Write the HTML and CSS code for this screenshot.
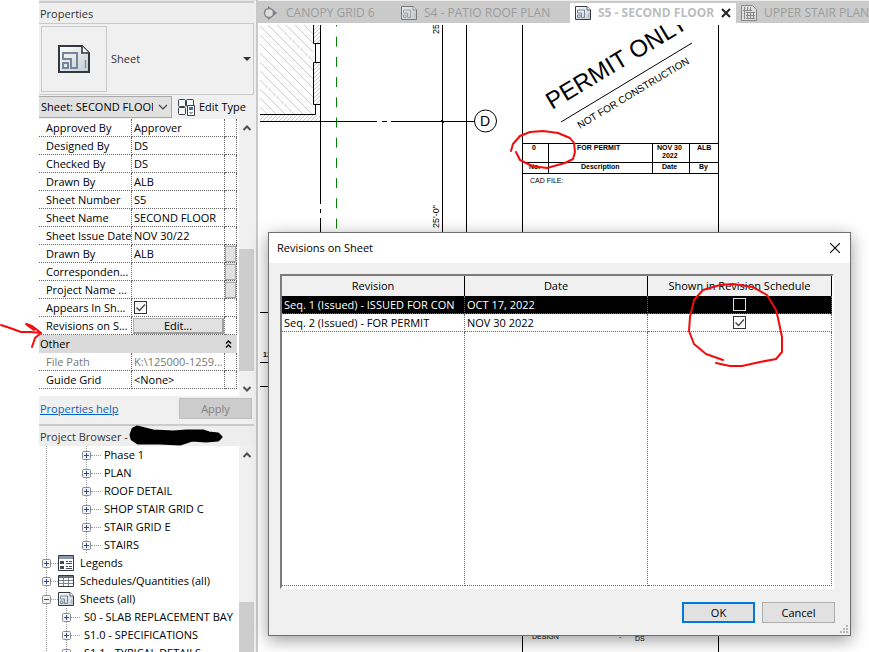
FILE: index.html
```html
<!DOCTYPE html>
<html lang="en">
<head>
<meta charset="utf-8">
<title>Revisions on Sheet</title>
<link rel="stylesheet" href="styles.css">
</head>
<body>
<svg class="defs" aria-hidden="true">
  <defs>
    <linearGradient id="paper" x1="0" y1="0" x2="1" y2="1">
      <stop offset="0" stop-color="#fff"/><stop offset="1" stop-color="#c4ccd4"/>
    </linearGradient>
    <symbol id="sheet" viewBox="0 0 32 28">
      <path d="M1 1h23l7 7v19H1z" fill="url(#paper)" stroke="#33383e" stroke-width="2"/>
      <path d="M24 1v7h7" fill="#fff" stroke="#33383e" stroke-width="1.6"/>
      <path d="M5 14V8h14v15h-6v-9zM5 18h5v5H5z" fill="none" stroke="#76869a" stroke-width="2"/>
      <path d="M27.500 15v8" stroke="#8a929c" stroke-width="1.500"/>
    </symbol>
    <symbol id="up" viewBox="0 0 10 6"><path d="M1.500 5 5 1.500 8.500 5" fill="none" stroke="#505050" stroke-width="2"/></symbol>
    <symbol id="down" viewBox="0 0 10 6"><path d="M1.500 1 5 4.500 8.500 1" fill="none" stroke="#505050" stroke-width="2"/></symbol>
    <symbol id="plus" viewBox="0 0 9 9"><rect x=".5" y=".5" width="8" height="8" rx="1" fill="#f4f4f4" stroke="#8c8c8c"/><path d="M2 4.500h5M4.500 2v5" stroke="#2b4a9b"/></symbol>
    <symbol id="minus" viewBox="0 0 9 9"><rect x=".5" y=".5" width="8" height="8" rx="1" fill="#f4f4f4" stroke="#8c8c8c"/><path d="M2 4.500h5" stroke="#2b4a9b"/></symbol>
  </defs>
</svg>

<div class="app">
  <aside class="dock">
    <section class="properties">
      <h2 class="panel-title">Properties</h2>
      <div class="type-box">
        <div class="preview"><svg width="32" height="28"><use href="#sheet"/></svg></div>
        <span class="type-name">Sheet</span>
        <svg class="caret" width="8" height="4"><path d="M0 0h8L4 4z" fill="#333"/></svg>
      </div>
      <div class="selector">
        <div class="combo">
          <select aria-label="Element"><option>Sheet: SECOND FLOOR</option></select>
          <svg class="combo-arrow" width="10" height="6" viewBox="0 0 10 6"><path d="M1 1l4 4 4-4" fill="none" stroke="#444" stroke-width="1.200"/></svg>
        </div>
        <button class="edit-type">
          <svg width="17" height="17" viewBox="0 0 17 17" stroke="#3a4048">
            <path d="M1.500.500h5q1 0 1 1v5q0 1-1 1h-5q-1 0-1-1v-5q0-1 1-1zM9.500.500h5q1 0 1 1v5q0 1-1 1h-5q-1 0-1-1v-5q0-1 1-1zM1.500 8.500h5q1 0 1 1v5q0 1-1 1h-5q-1 0-1-1v-5q0-1 1-1z" fill="#f4f6f8"/>
            <path d="M9.500 6.500h7v10h-7z" fill="#fff"/><path d="M11 8h4v3h-4z" fill="#2f73b8" stroke="none"/><path d="M11.500 13l1.500 1.500 1.500-1.500" fill="none"/>
          </svg>
          Edit Type
        </button>
      </div>
      <div class="scroll-area">
        <table class="props">
          <colgroup><col class="c-name"><col class="c-value"><col class="c-assoc"></colgroup>
          <tbody>
            <tr><th>Approved By</th><td>Approver</td><td></td></tr>
            <tr><th>Designed By</th><td>DS</td><td></td></tr>
            <tr><th>Checked By</th><td>DS</td><td></td></tr>
            <tr><th>Drawn By</th><td>ALB</td><td></td></tr>
            <tr><th>Sheet Number</th><td>S5</td><td></td></tr>
            <tr><th>Sheet Name</th><td>SECOND FLOOR</td><td></td></tr>
            <tr><th>Sheet Issue Date</th><td>NOV 30/22</td><td></td></tr>
            <tr><th>Drawn By</th><td>ALB</td><td class="assoc"><button aria-label="Associate Drawn By"></button></td></tr>
            <tr><th>Corresponden...</th><td></td><td class="assoc"><button aria-label="Associate Correspondence"></button></td></tr>
            <tr><th>Project Name ...</th><td></td><td class="assoc"><button aria-label="Associate Project Name"></button></td></tr>
            <tr><th><label for="appears">Appears In Sh...</label></th><td><input class="check" type="checkbox" id="appears" checked></td><td></td></tr>
            <tr><th>Revisions on S...</th><td class="edit-cell"><button>Edit...</button></td><td></td></tr>
            <tr class="group"><th colspan="2">Other</th><td><svg width="7" height="8" viewBox="0 0 7 8"><path d="M1 3.500 3.500 1 6 3.500M1 7.500 3.500 5 6 7.500" fill="none" stroke="#000" stroke-width="1.400"/></svg></td></tr>
            <tr class="muted"><th>File Path</th><td>K:\125000-1259...</td><td></td></tr>
            <tr><th>Guide Grid</th><td>&lt;None&gt;</td><td></td></tr>
          </tbody>
        </table>
        <div class="scrollbar props-bar"><svg width="10" height="6"><use href="#up"/></svg><i></i><i class="thumb"></i><svg width="10" height="6"><use href="#down"/></svg></div>
      </div>
      <div class="panel-foot"><a href="#help">Properties help</a><button class="apply" disabled>Apply</button></div>
    </section>

    <section class="browser">
      <h2 class="panel-title">Project Browser -</h2>
      <div class="tree-area">
        <ul class="tree">
          <li class="lv3"><svg><use href="#plus"/></svg><i></i>Phase 1</li>
          <li class="lv3"><svg><use href="#plus"/></svg><i></i>PLAN</li>
          <li class="lv3"><svg><use href="#plus"/></svg><i></i>ROOF DETAIL</li>
          <li class="lv3"><svg><use href="#plus"/></svg><i></i>SHOP STAIR GRID C</li>
          <li class="lv3"><svg><use href="#plus"/></svg><i></i>STAIR GRID E</li>
          <li class="lv3"><svg><use href="#plus"/></svg><i></i>STAIRS</li>
          <li class="lv1"><svg><use href="#plus"/></svg><i></i><svg class="icon" viewBox="0 0 16 16"><path d="M.5 .5h15v15H.5z" fill="#fff" stroke="#33383e"/><path d="M1 1h14v3H1z" fill="#8d97ab"/><path d="M2 6h4v3H2zM2 11h4v3H2z" fill="#444b54"/><path d="M8 6.500h2M11 6.500h3M8 8.500h6M8 11.500h2M11 11.500h3M8 13.500h6" stroke="#444b54"/></svg>Legends</li>
          <li class="lv1"><svg><use href="#plus"/></svg><i></i><svg class="icon" viewBox="0 0 16 16"><path d="M.5 2.500h15v11H.5z" fill="#fff" stroke="#33383e"/><path d="M1 3h14v2H1z" fill="#687587"/><path d="M1 7.500h14M1 10.500h14M5.500 5v8M10.500 5v8" stroke="#7a848f"/></svg>Schedules/Quantities (all)</li>
          <li class="lv1"><svg><use href="#minus"/></svg><i></i><svg class="icon" viewBox="0 0 16 16"><use href="#sheet" width="16" height="14" y="1"/></svg>Sheets (all)</li>
          <li class="lv2"><svg><use href="#plus"/></svg><i></i>S0 - SLAB REPLACEMENT BAY</li>
          <li class="lv2"><svg><use href="#plus"/></svg><i></i>S1.0 - SPECIFICATIONS</li>
          <li class="lv2"><svg><use href="#plus"/></svg><i></i>S1.1 - TYPICAL DETAILS</li>
        </ul>
        <div class="scrollbar tree-bar"><svg width="10" height="6"><use href="#up"/></svg><i></i><i class="thumb"></i></div>
      </div>
    </section>
  </aside>

  <main class="workspace">
    <nav class="tabs">
      <a class="tab tab-canopy" href="#canopy"><svg class="icon" viewBox="0 0 16 16"><path d="M5 1l9 7-9 7z" fill="#777"/><circle cx="6" cy="8" r="4.500" fill="#ddd" stroke="#888" stroke-width="1.500"/></svg>CANOPY GRID 6</a>
      <a class="tab tab-patio" href="#patio"><svg class="icon faded" viewBox="0 0 16 16"><use href="#sheet" width="16" height="14" y="1"/></svg>S4 - PATIO ROOF PLAN</a>
      <div class="tab active"><svg class="icon" viewBox="0 0 16 16"><use href="#sheet" width="16" height="14" y="1"/></svg><b>S5 - SECOND FLOOR</b><button aria-label="Close tab"><svg width="10" height="10" viewBox="0 0 10 10"><path d="M1 1l8 8M9 1 1 9" stroke="#222" stroke-width="2"/></svg></button></div>
      <a class="tab tab-stair" href="#stair"><svg class="icon" viewBox="0 0 16 16" fill="none" stroke="#888"><path d="M.5 .5h11l4 4v11H.5z" fill="#ddd"/><path d="M3.500 2v12M6.500 2v3M9.500 2v3M6.500 7v7M9.500 7v7M12.500 7v7M2 5.500h9M5 7.500h9M5 10.500h9M5 13.500h9"/></svg>UPPER STAIR PLAN</a>
    </nav>
    <svg class="drawing" width="609" height="627" viewBox="260 25 609 627">
      <defs>
        <pattern id="hatch" width="9" height="9" patternUnits="userSpaceOnUse"><path d="M-1-1l11 11" stroke="#cfcfcf"/></pattern>
        <pattern id="fine" width="4" height="4" patternUnits="userSpaceOnUse"><path d="M-1 5l6-6" stroke="#c8c8c8"/></pattern>
      </defs>
      <path d="M260 25h53v89h-53z" fill="url(#hatch)"/>
      <path d="M314 25h6v18h-6zM314 62h6v42h-6zM260 115h60v6h-60z" fill="url(#fine)"/>
      <g class="ink">
        <path d="M313.500 25v18.500h7M315.500 43v19M320 62.500h-6.500v42h7M315.500 104v10.500H260"/>
        <path d="M320.500 25v179M320.500 209v4M320.500 218v20M260 121.500h117M382 121.500h5M391 121.500h83"/>
        <path d="M442.500 25v215M466.500 25v215M441 120l3 3"/>
        <circle cx="485.500" cy="121" r="11"/>
        <path d="M522.500 25v627M718.500 25v627M522 143.500h196M522 162.500h196M522 173.500h196M548.500 143v30M652.500 143v30M689.500 143v30"/>
        <path d="M561 122l131-79M260 312.500h10M260 362.500h10M260 386.500h10"/>
      </g>
      <path d="M336.500 16.500V240" stroke="#008000" stroke-dasharray="10 10.200"/>
      <text x="480" y="126" class="t14">D</text>
      <text transform="translate(439 34) rotate(-90)" class="t9">25'-0"</text>
      <text transform="translate(439 228) rotate(-90)" class="t9">25'-0"</text>
      <text transform="translate(552 110) rotate(-31)" class="t24">PERMIT ONLY</text>
      <text transform="translate(580 129) rotate(-31)" class="t10">NOT FOR CONSTRUCTION</text>
      <g class="t7 heavy">
        <text x="532" y="150">0</text><text x="577" y="150">FOR PERMIT</text>
        <text x="657" y="150">NOV 30</text><text x="662" y="158">2022</text><text x="697" y="150">ALB</text>
        <text x="529" y="169">No.</text><text x="581" y="169">Description</text><text x="662" y="169">Date</text><text x="699" y="169">By</text>
        <text x="263" y="357">12</text>
      </g>
      <g class="t7"><text x="530" y="183">CAD FILE:</text><text x="532" y="639">DESIGN</text><text x="619" y="639">-</text><text x="635" y="641">DS</text></g>
    </svg>
  </main>
</div>

<div class="dialog" role="dialog" aria-labelledby="dialog-title">
  <header><h1 id="dialog-title">Revisions on Sheet</h1><button class="close" aria-label="Close"><svg width="10" height="10" viewBox="0 0 10 10"><path d="M0 0l10 10M10 0 0 10" stroke="#000" stroke-width="1.100"/></svg></button></header>
  <div class="dialog-body">
    <div class="frame">
      <table class="revisions">
        <colgroup><col class="r-name"><col class="r-date"><col></colgroup>
        <thead><tr><th>Revision</th><th>Date</th><th>Shown in Revision Schedule</th></tr></thead>
        <tbody>
          <tr class="selected"><td>Seq. 1 (Issued) - ISSUED FOR CON</td><td>OCT 17, 2022</td><td><input class="check" type="checkbox" aria-label="Show revision 1"></td></tr>
          <tr><td>Seq. 2 (Issued) - FOR PERMIT</td><td>NOV 30 2022</td><td><input class="check" type="checkbox" aria-label="Show revision 2" checked></td></tr>
          <tr class="filler"><td></td><td></td><td></td></tr>
        </tbody>
      </table>
    </div>
    <footer><button class="ok">OK</button><button>Cancel</button></footer>
  </div>
  <svg class="grip" width="8" height="8" viewBox="0 0 8 8" fill="#b8b8b8"><path d="M6 0h2v2H6zM3 3h2v2H3zM6 3h2v2H6zM0 6h2v2H0zM3 6h2v2H3zM6 6h2v2H6z"/></svg>
</div>

<svg class="markup" width="869" height="652" viewBox="0 0 869 652" fill="none" stroke="#f30b0b" stroke-width="2" stroke-linecap="round" stroke-linejoin="round">
  <path d="M1 325l9 3 11 4 10 0 10 1M26 324l6 2 9 7-6 5-3 9M27 325l7 5"/>
  <path d="M511 151l2-7 7-8 10-4 13-1 15 2 12 5 4 5 1 9-2 7-8 4-18 5-15-2-12-6-4-8"/>
  <path d="M716 363l14 3h12l18-4 16-3 6-7v-15l-4-19-2-8-9-15-14-8-20-3-13 1-17 5-9 10-4 17-1 14 5 13 12 10 17 6"/>
  <path d="M133 429l4-2 16 4 20 1 14-1 16 0 6 2 9 1 3 3-3 3-12 1-14-1-12 4-20-1-22 0-6-4-1-4z" fill="#000" stroke="#000" stroke-width="3"/>
</svg>
</body>
</html>
```

FILE: styles.css
```css
* { box-sizing: border-box; }

body {
  margin: 0;
  height: 100vh;
  overflow: hidden;
  background: #fff;
  color: #000;
  font: 11px/18px "Open Sans", "Noto Sans", sans-serif;
}

h1, h2 { margin: 0; font-size: 11px; font-weight: 400; }
button, select { font: inherit; color: inherit; padding: 0; }
.defs { position: absolute; width: 0; height: 0; }
.icon { width: 16px; height: 16px; flex: none; }

.app { display: flex; height: 100vh; padding-left: 39px; }

/* Docked panels */
.dock {
  flex: none;
  width: 217px;
  display: flex;
  flex-direction: column;
  background: #f0f0f0;
  border-top: 1px solid #e4e4e4;
  padding-right: 2px;
}
.panel-title { padding: 2px 0 0 1px; line-height: 18px; color: #333; background: #eee; }
.properties { border-top: 2px solid #cbcbcb; }

.type-box {
  display: flex;
  align-items: center;
  height: 72px;
  padding: 2px;
  border: 1px solid #c9c9c9;
  border-left: 0;
}
.preview { display: grid; place-items: center; width: 66px; height: 66px; border: 1px solid #c9c9c9; }
.type-name { flex: 1; padding-left: 4px; color: #333; }

.selector { display: flex; align-items: center; gap: 6px; padding: 1px 0; }
.combo { position: relative; width: 133px; }
.combo select {
  display: block;
  width: 100%;
  height: 22px;
  padding: 0 18px 0 2px;
  appearance: none;
  border: 1px solid #a8a8a8;
  border-left: 0;
  border-radius: 0;
  background: #e1e1e1;
}
.combo-arrow { position: absolute; right: 4px; top: 8px; }
.edit-type { display: flex; align-items: center; gap: 4px; border: 0; background: none; white-space: nowrap; }

.scroll-area { display: flex; justify-content: space-between; height: 277px; background: #fff; }
.props { width: 198px; height: 270px; border-collapse: separate; border-spacing: 0; table-layout: fixed; }
.c-name { width: 93px; }
.c-value { width: 93px; }
.c-assoc { width: 12px; }
.props th, .props td {
  height: 18px;
  padding: 0 0 0 2px;
  border-right: 1px dotted #666;
  border-bottom: 1px dotted #666;
  font-weight: 400;
  line-height: 17px;
  text-align: left;
  white-space: nowrap;
  overflow: hidden;
}
.props th { padding-left: 7px; }
.props td:last-child { padding: 0; }
.props .assoc { background: #e1e1e1; }
.assoc button { display: block; width: 11px; height: 16px; border: 1px solid #a8a8a8; background: #e1e1e1; }
.props .edit-cell { padding: 0 0 0 1px; }
.edit-cell button { display: block; width: 91px; height: 16px; line-height: 14px; border: 1px solid #b0b0b0; border-right: 2px solid #a0a0a0; border-bottom: 2px solid #a0a0a0; background: #e1e1e1; }
.props .group th, .props .group td { border-color: #dadada; background: #dadada; }
.props .group th { padding-left: 1px; }
.props .group svg { display: block; }
.props .muted { color: #777; }

.check {
  appearance: none;
  display: block;
  width: 13px;
  height: 13px;
  margin: 0;
  border: 1px solid #333;
  background: #fff;
}
.check:checked { background: #fff url("data:image/svg+xml,%3Csvg xmlns='http://www.w3.org/2000/svg' viewBox='0 0 11 11'%3E%3Cpath d='M1.500 5.500l3 3 5.500-6' fill='none' stroke='%23444' stroke-width='1.300'/%3E%3C/svg%3E"); }

.scrollbar { display: grid; width: 15px; justify-items: center; align-items: center; background: #f0f0f0; }
.props-bar { grid-template-rows: 18px 1fr 122px 25px; }
.props-bar svg:last-child { align-self: end; margin-bottom: 4px; }
.tree-bar { grid-template-rows: 18px 138px 1fr; }
.thumb { width: 100%; height: 100%; background: #cdcdcd; }

.panel-foot { display: flex; justify-content: space-between; align-items: center; padding: 2px 2px 5px 1px; }
.panel-foot a { color: #0563c1; }
.apply { width: 73px; height: 21px; border: 1px solid #bfbfbf; background: #ccc; color: #838383; }

.browser { flex: 1; min-height: 0; display: flex; flex-direction: column; border-top: 2px solid #cbcbcb; }
.tree-area { flex: 1; min-height: 0; display: flex; background: #fff; overflow: hidden; }
.tree { flex: 1; min-width: 0; margin: 0; padding: 0; list-style: none; overflow: hidden; }
.tree li { display: flex; align-items: center; height: 18px; white-space: nowrap; background: repeating-linear-gradient(#999 0 1px, transparent 1px 2px) 7px 0 / 1px 100% no-repeat; }
.tree li > svg:first-child { flex: none; width: 9px; height: 9px; }
.tree li > i { flex: none; height: 1px; border-top: 1px dotted #999; }
.tree .icon { margin-right: 6px; }
.tree .lv1 { padding-left: 3px; }
.tree .lv1 > i { width: 7px; }
.tree .lv2 { padding-left: 23px; }
.tree .lv2 > i { width: 9px; margin-right: 4px; }
.tree .lv3 { padding-left: 43px; }
.tree .lv3 > i { width: 10px; margin-right: 3px; }
.tree .lv2, .tree .lv3 {
  background-image: repeating-linear-gradient(#999 0 1px, transparent 1px 2px), repeating-linear-gradient(#999 0 1px, transparent 1px 2px);
  background-size: 1px 100%;
}
.tree .lv2 { background-position: 7px 0, 27px 0; }
.tree .lv3 { background-position: 7px 0, 47px 0; }

/* Drawing area */
.workspace { flex: 1; min-width: 0; border-left: 2px solid #c9c9c9; overflow: hidden; }
.tabs { display: flex; align-items: stretch; height: 23px; border-top: 1px solid #eee; background: #cacaca; font-size: 12px; }
.tab { display: flex; align-items: center; gap: 7px; flex: none; color: #9c9c9c; text-decoration: none; white-space: nowrap; padding-top: 2px; }
.tab-canopy { width: 138px; padding-left: 5px; }
.tab-patio { width: 174px; padding-left: 5px; }
.tab.active { width: 166px; margin-top: 2px; padding: 0 5px; background: #fff; color: #bdbdbd; }
.tab.active button { display: flex; margin-left: auto; border: 0; background: none; }
.tab-stair { padding-left: 5px; }
.faded { opacity: .55; }
.drawing { display: block; margin: 2px 0 0 2px; }
.drawing text { font-family: "Liberation Sans", sans-serif; fill: #000; }
.ink { fill: none; stroke: #000; }
.t7 text { font-size: 7px; }
.heavy { font-weight: 700; }
.drawing .t9 { font-size: 9px; }
.drawing .t10 { font-size: 10px; }
.drawing .t14 { font-size: 14px; }
.drawing .t24 { font-size: 24px; }

/* Dialog */
.dialog {
  position: absolute;
  left: 268px;
  top: 232px;
  width: 583px;
  border: 1px solid #707070;
  background: #f0f0f0;
  box-shadow: 0 4px 16px rgba(0, 0, 0, .4);
}
.dialog header { display: flex; justify-content: space-between; align-items: center; height: 30px; padding: 0 10px 0 8px; background: #fff; }
.close { display: flex; border: 0; background: none; }
.dialog-body { padding: 11px 15px 12px 11px; }
.frame { height: 315px; margin-right: 1px; border: 2px solid #7c7c7c; border-right-color: #fff; border-bottom-color: #fff; background: #fff; }
.revisions { width: 100%; height: 310px; border-collapse: separate; border-spacing: 0; table-layout: fixed; }
.r-name { width: 183px; }
.r-date { width: 183px; }
.revisions th { height: 20px; padding: 0; border-right: 1px solid #000; background: #f0f0f0; font-weight: 400; line-height: 20px; }
.revisions td { height: 18px; padding: 0 2px; border-right: 1px dotted #666; border-bottom: 1px dotted #666; line-height: 17px; white-space: nowrap; overflow: hidden; }
.revisions .check { margin: 0 auto; }
.revisions .filler td { height: auto; }
.selected { background: #000; color: #fff; }
.selected .check { border-color: #ddd; background: #000; }
.dialog footer { display: flex; justify-content: flex-end; gap: 7px; padding-top: 13px; }
.dialog footer button { width: 73px; height: 21px; border: 1px solid #adadad; background: #e1e1e1; }
.dialog footer .ok { border: 2px solid #0078d7; }
.grip { position: absolute; right: 2px; bottom: 2px; }

/* Freehand pen marks */
.markup { position: absolute; left: 0; top: 0; pointer-events: none; }
```
